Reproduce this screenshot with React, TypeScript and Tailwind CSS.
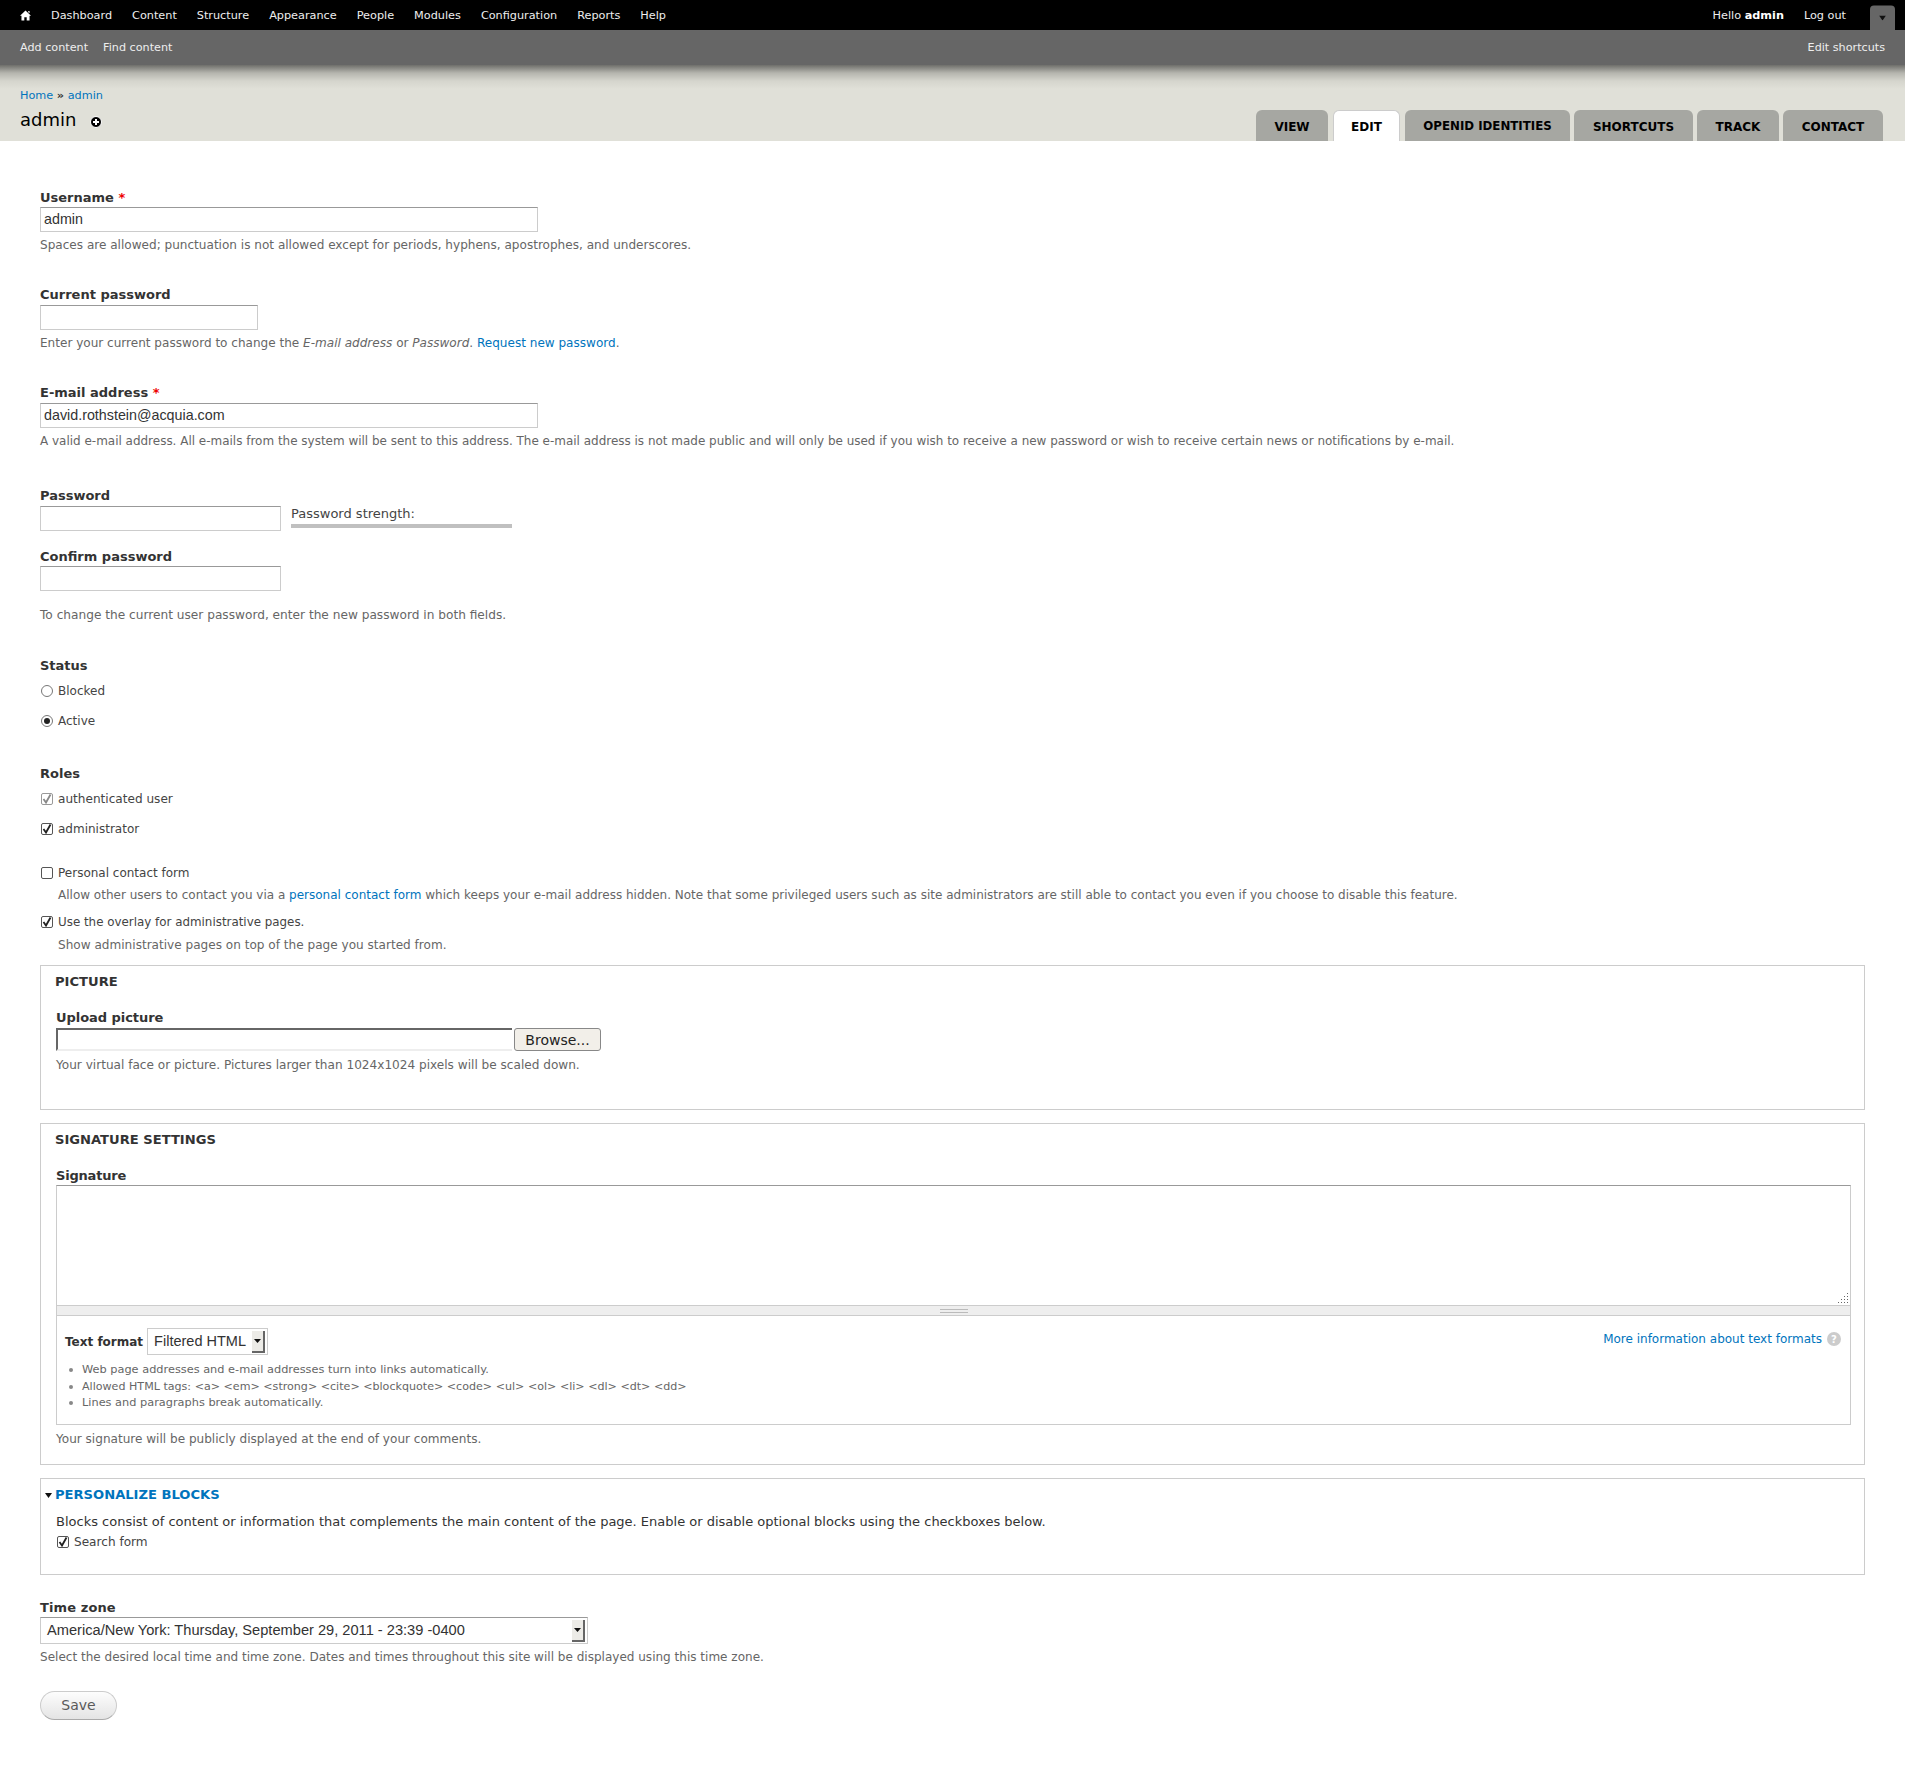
const navItems = ['Dashboard', 'Content', 'Structure', 'Appearance', 'People', 'Modules', 'Configuration', 'Reports', 'Help'];

const tabs = [
  { label: 'VIEW', w: 'w-[72px] mr-px', size: 'text-[12px]' },
  { label: 'EDIT', w: 'w-[67px] mr-px', size: 'text-[12px]', active: true },
  { label: 'OPENID IDENTITIES', w: 'w-[165px]', size: 'text-[11.8px]' },
  { label: 'SHORTCUTS', w: 'w-[119px]', size: 'text-[12px]' },
  { label: 'TRACK', w: 'w-[82px]', size: 'text-[12px]' },
  { label: 'CONTACT', w: 'w-[100px]', size: 'text-[12px]' },
];

const Label = ({ children, className = '' }: { children: React.ReactNode; className?: string }) => (
  <div className={`h-[18px] text-[13px] leading-[18px] font-bold text-[#333] ${className}`}>{children}</div>
);

// hinted widths differ a bit per line in the reference, so size is passed in
const Desc = ({ children, className = '', size = 'text-[12px]' }: { children: React.ReactNode; className?: string; size?: string }) => (
  <div className={`h-[18px] leading-[18px] text-[#666] ${size} ${className}`}>{children}</div>
);

const Link = ({ children }: { children: React.ReactNode }) => (
  <a href="#" className="text-[#0074bd]">{children}</a>
);

const TextInput = ({ value = '', className = '' }: { value?: string; className?: string }) => (
  <input
    type="text"
    readOnly
    value={value}
    className={`block h-[25px] border border-[#ccc] border-t-[#999] bg-white px-[3px] pb-[2px] font-['Liberation_Sans',sans-serif] text-[14.3px] text-[#333] outline-none ${className}`}
  />
);

const Checkbox = ({ dim = false, checked = true }: { dim?: boolean; checked?: boolean }) => (
  <span className={`mr-[5px] flex size-[12px] shrink-0 items-center justify-center rounded-[2px] border bg-white ${dim ? 'border-[#999]' : 'border-[#555]'}`}>
    {checked && (
      <svg viewBox="0 0 12 12" className="size-[12px] shrink-0">
        <path d="M2.5 6 L5 9.5 L9.5 1.5" fill="none" stroke={dim ? '#888' : '#222'} strokeWidth="1.8" />
      </svg>
    )}
  </span>
);

const Radio = ({ checked = false }: { checked?: boolean }) => (
  <span className="mr-[5px] flex size-[12px] shrink-0 items-center justify-center rounded-full border border-[#777] bg-white">
    {checked && <span className="size-[6px] rounded-full bg-[#222]" />}
  </span>
);

const Option = ({ control, children, className = '', size = 'text-[12px]' }: { control: React.ReactNode; children: React.ReactNode; className?: string; size?: string }) => (
  <div className={`flex h-[18px] items-center pl-px leading-[18px] text-[#444] ${size} ${className}`}>
    {control}
    <span>{children}</span>
  </div>
);

const SelectArrow = () => (
  <span className="flex h-[22px] w-[13px] shrink-0 items-center justify-center border-r-2 border-b-2 border-r-[#666] border-b-[#666] bg-[#ecebe7]">
    <svg viewBox="0 0 7 4" className="h-[4px] w-[7px]">
      <path d="M0 0H7L3.5 4Z" fill="#111" />
    </svg>
  </span>
);

const Tip = ({ children, size }: { children: React.ReactNode; size: string }) => (
  <li className={`flex h-[17px] items-center leading-[17px] ${size}`}>
    <span className="mr-[9px] size-[4px] shrink-0 rounded-full bg-[#888]" />
    {children}
  </li>
);

export default function App() {
  return (
    <div className="min-h-[1786px] bg-white font-['DejaVu_Sans',sans-serif]">
      <div className="flex h-[30px] items-center bg-black pl-[20px] pr-[10px] text-[11.25px] text-[#eee]">
        <svg viewBox="0 0 12 12" className="mr-[20px] size-[11px]">
          <path d="M6 .5 L12 6.3 H10.4 V11.5 H7.3 V8 H4.7 V11.5 H1.6 V6.3 H0 Z M9 1 H10.4 V3.6 L9 2.4 Z" fill="#fff" />
        </svg>
        <div className="flex gap-[20px] pt-[2px]">
          {navItems.map(item => (
            <span key={item}>{item}</span>
          ))}
        </div>
        <div className="ml-auto flex items-center">
          <span className="pt-[2px]">Hello <b className="text-white">admin</b></span>
          <span className="ml-[20px] pt-[2px]">Log out</span>
          <span className="ml-[24px] flex h-[25px] w-[25px] translate-y-[2.5px] items-center justify-center rounded-t-[4px] bg-[#666]">
            <svg viewBox="0 0 7 5" className="h-[5px] w-[7px]">
              <path d="M0 0H7L3.5 5Z" fill="#111" />
            </svg>
          </span>
        </div>
      </div>

      <div className="flex h-[35px] items-center justify-between bg-[#666] px-[20px] pt-[2px] text-[11.2px] text-[#eee]">
        <div className="flex gap-[15px]">
          <span>Add content</span>
          <span>Find content</span>
        </div>
        <span>Edit shortcuts</span>
      </div>

      <div className="flex h-[76px] items-end justify-between bg-[linear-gradient(#6f6f6b_0px,#b5b5ae_8px,#d5d5cd_16px,#e0e0d8_24px)] pl-[20px] pr-[22px]">
        <div className="self-start pt-[22px]">
          <div className="h-[18px] text-[11.25px] leading-[18px] text-[#333]">
            <Link>Home</Link> <b>»</b> <Link>admin</Link>
          </div>
          <div className="mt-[2px] flex h-[26px] items-center text-[18px] leading-[26px] text-black">
            admin
            <svg viewBox="0 0 12 12" className="ml-[14px] mt-[3px] size-[12px]">
              <circle cx="6" cy="6" r="5.5" fill="#000" stroke="#fff" strokeWidth="1" />
              <path d="M6 3V9M3 6H9" stroke="#fff" strokeWidth="2" />
            </svg>
          </div>
        </div>
        <div className="flex gap-[4px]">
          {tabs.map(tab => (
            <div
              key={tab.label}
              className={`flex h-[31px] items-center justify-center rounded-t-[6px] pt-[2px] font-bold text-black ${tab.size} ${tab.w} ${tab.active ? 'border border-b-0 border-[#ccc] bg-white' : 'bg-[#a6a7a2]'}`}
            >
              {tab.label}
            </div>
          ))}
        </div>
      </div>

      <form className="px-[40px] pt-[48px]">
        <Label>Username <span className="text-[#e00]">*</span></Label>
        <TextInput value="admin" className="w-[498px]" />
        <Desc className="mt-[4px]" size="text-[12.07px]">Spaces are allowed; punctuation is not allowed except for periods, hyphens, apostrophes, and underscores.</Desc>

        <Label className="mt-[32px]">Current password</Label>
        <TextInput className="mt-px w-[218px]" />
        <Desc className="mt-[4px]" size="text-[12.05px]">
          Enter your current password to change the <em>E-mail address</em> or <em>Password</em>. <Link>Request new password</Link>.
        </Desc>

        <Label className="mt-[32px]">E-mail address <span className="text-[#e00]">*</span></Label>
        <TextInput value="david.rothstein@acquia.com" className="mt-px w-[498px]" />
        <Desc className="mt-[4px]" size="text-[11.97px]">A valid e-mail address. All e-mails from the system will be sent to this address. The e-mail address is not made public and will only be used if you wish to receive a new password or wish to receive certain news or notifications by e-mail.</Desc>

        <Label className="mt-[37px]">Password</Label>
        <div className="mt-px flex">
          <TextInput className="w-[241px]" />
          <div className="ml-[10px] w-[221px]">
            <div className="h-[18px] text-[13px] leading-[16px] text-[#444]">Password strength:</div>
            <div className="h-[4px] bg-[#c0c0c0]" />
          </div>
        </div>
        <Label className="mt-[17px]">Confirm password</Label>
        <TextInput className="w-[241px]" />
        <Desc className="mt-[15px]" size="text-[12.16px]">To change the current user password, enter the new password in both fields.</Desc>

        <Label className="mt-[33px]">Status</Label>
        <Option control={<Radio />} className="mt-[7px]">Blocked</Option>
        <Option control={<Radio checked />} className="mt-[12px]">Active</Option>

        <Label className="mt-[35px]">Roles</Label>
        <Option control={<Checkbox dim />} className="mt-[7px]" size="text-[12.1px]">authenticated user</Option>
        <Option control={<Checkbox />} className="mt-[12px]">administrator</Option>

        <Option control={<Checkbox checked={false} />} className="mt-[26px]">Personal contact form</Option>
        <Desc className="mt-[4px] pl-[18px]">
          Allow other users to contact you via a <Link>personal contact form</Link> which keeps your e-mail address hidden. Note that some privileged users such as site administrators are still able to contact you even if you choose to disable this feature.
        </Desc>
        <Option control={<Checkbox />} className="mt-[9px]" size="text-[11.88px]">Use the overlay for administrative pages.</Option>
        <Desc className="mt-[5px] pl-[18px]" size="text-[12.08px]">Show administrative pages on top of the page you started from.</Desc>

        <fieldset className="mt-[11px] border border-[#ccc] pb-[35px] pl-[15px] pr-[13px] pt-[7px]">
          <div className="-ml-px h-[18px] text-[13.1px] leading-[18px] font-bold text-[#333]">PICTURE</div>
          <Label className="mt-[18px] tracking-[-0.05px]">Upload picture</Label>
          <div className="mt-px flex h-[23px]">
            <div className="w-[456px] border-l-2 border-t-2 border-b-2 border-l-[#666] border-t-[#666] border-b-[#eee] bg-white" />
            <div className="ml-[2px] flex w-[87px] items-center justify-center rounded-[3px] border border-[#888] bg-[#f2efe9] pt-[2px] text-[14px] text-[#222]">Browse...</div>
          </div>
          <Desc className="mt-[5px]" size="text-[12.1px]">Your virtual face or picture. Pictures larger than 1024x1024 pixels will be scaled down.</Desc>
        </fieldset>

        <fieldset className="mt-[13px] border border-[#ccc] pb-[16px] pl-[15px] pr-[13px] pt-[7px]">
          <div className="-ml-px h-[18px] text-[13.1px] leading-[18px] font-bold text-[#333]">SIGNATURE SETTINGS</div>
          <Label className="mt-[18px] tracking-[-0.2px]">Signature</Label>
          <div className="relative h-[120px] border border-[#ccc] border-t-[#999] border-b-0 bg-white">
            <svg viewBox="0 0 10 10" className="absolute bottom-[2px] right-[2px] size-[10px]">
              <path d="M9 0h1v1H9zM9 3h1v1H9zM6 3h1v1H6zM9 6h1v1H9zM6 6h1v1H6zM3 6h1v1H3zM9 9h1v1H9zM6 9h1v1H6zM3 9h1v1H3zM0 9h1v1H0z" fill="#666" />
            </svg>
          </div>
          <div className="flex h-[11px] items-center justify-center border border-[#ccc] bg-[#eee]">
            <div className="h-[4px] w-[28px] border-y border-[#bbb]" />
          </div>
          <div className="h-[109px] border border-t-0 border-[#ccc] px-[8px]">
            <div className="flex justify-between">
              <div className="mt-[12px] flex h-[27px] items-center">
                <span className="text-[12px] font-bold text-[#333]">Text format</span>
                <div className="ml-[4px] flex h-[27px] w-[121px] items-center justify-between border border-[#ccc] pl-[6px] pr-[2px] font-['Liberation_Sans',sans-serif] text-[14.5px] text-[#333]">
                  Filtered HTML
                  <SelectArrow />
                </div>
              </div>
              <div className="mt-[14px] flex h-[18px] items-center text-[12px] text-[#0074bd]">
                More information about text formats
                <span className="ml-[5px] mr-[1px] flex size-[14px] items-center justify-center rounded-full bg-[#ccc] text-[10px] font-bold text-white">?</span>
              </div>
            </div>
            <ul className="mt-[6px] pl-[4px] text-[#666]">
              <Tip size="text-[11.33px]">Web page addresses and e-mail addresses turn into links automatically.</Tip>
              <Tip size="text-[11.1px] -mb-px">Allowed HTML tags: &lt;a&gt; &lt;em&gt; &lt;strong&gt; &lt;cite&gt; &lt;blockquote&gt; &lt;code&gt; &lt;ul&gt; &lt;ol&gt; &lt;li&gt; &lt;dl&gt; &lt;dt&gt; &lt;dd&gt;</Tip>
              <Tip size="text-[11.33px]">Lines and paragraphs break automatically.</Tip>
            </ul>
          </div>
          <Desc className="mt-[5px]" size="text-[12.07px]">Your signature will be publicly displayed at the end of your comments.</Desc>
        </fieldset>

        <fieldset className="mt-[13px] border border-[#ccc] pb-[23px] pl-[15px] pr-[13px] pt-[7px]">
          <div className="-ml-[11px] flex h-[18px] items-center text-[13.1px] leading-[18px] font-bold text-[#0074bd]">
            <svg viewBox="0 0 7 5" className="mr-[3px] h-[5px] w-[7px]">
              <path d="M0 0H7L3.5 5Z" fill="#111" />
            </svg>
            PERSONALIZE BLOCKS
          </div>
          <div className="mt-[9px] h-[18px] text-[13px] leading-[18px] text-[#333]">Blocks consist of content or information that complements the main content of the page. Enable or disable optional blocks using the checkboxes below.</div>
          <Option control={<Checkbox />} className="mt-[2px]" size="text-[12.1px]">Search form</Option>
        </fieldset>

        <Label className="mt-[24px] tracking-[0.1px]">Time zone</Label>
        <div className="flex h-[27px] w-[548px] items-center justify-between border border-[#ccc] border-t-[#999] pl-[6px] pr-[2px] font-['Liberation_Sans',sans-serif] text-[14.64px] text-[#333]">
          America/New York: Thursday, September 29, 2011 - 23:39 -0400
          <SelectArrow />
        </div>
        <Desc className="mt-[4px]" size="text-[12.04px]">Select the desired local time and time zone. Dates and times throughout this site will be displayed using this time zone.</Desc>

        <button type="button" className="mt-[25px] block h-[29px] w-[77px] rounded-[15px] border border-[#ccc] border-b-[#aaa] bg-[linear-gradient(#fdfdfd,#e4e4e4)] text-[14px] text-[#5a5a5a]">Save</button>
      </form>
    </div>
  );
}
